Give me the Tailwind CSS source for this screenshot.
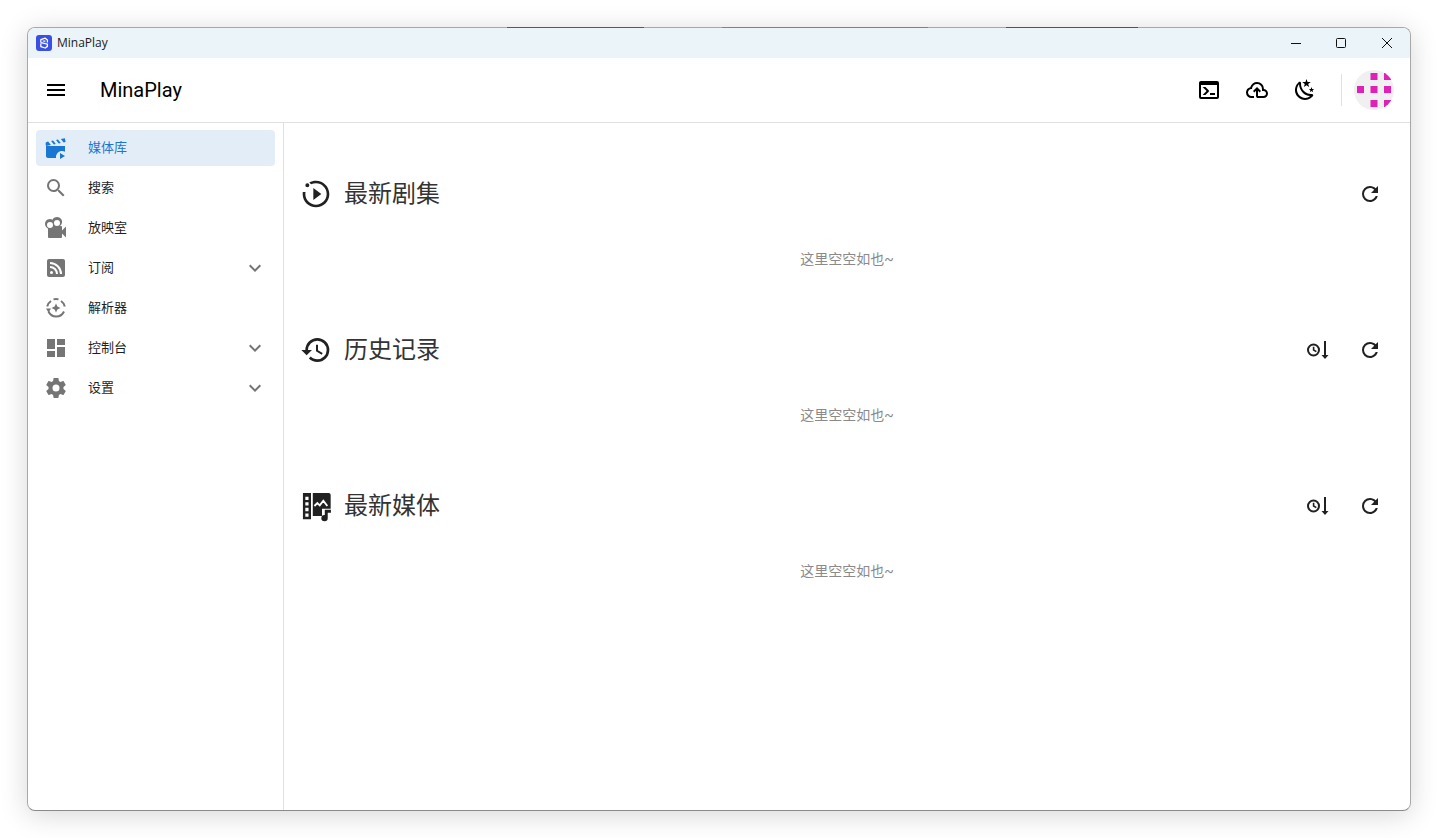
<!DOCTYPE html>
<html lang="en">
<head>
  <meta charset="UTF-8">
  <title>MinaPlay</title>
  <script src="https://cdn.jsdelivr.net/npm/@tailwindcss/browser@4"></script>
</head>
<body class="bg-white h-screen overflow-hidden pl-[27px] pt-[27px] font-['Roboto','Noto_Sans_CJK_SC',sans-serif]">
  <div class="relative w-[1384px] h-[784px] rounded-lg shadow-[0_4px_28px_rgba(0,0,0,0.16)]">
    <div class="w-full h-full flex flex-col overflow-hidden rounded-lg border border-[#a8a8a8] border-b-[#8a8a8a] bg-white">

      <!-- title bar -->
      <div class="h-[30px] shrink-0 flex items-center bg-[#ebf4f8]">
        <svg class="ml-2 w-4 h-4" viewBox="0 0 16 16">
          <rect width="16" height="16" rx="3" fill="#3a50e2"/>
          <path d="M4.8 7.6V4.6L9.2 3.2L11.4 5V7.6M4.8 7.6L11.4 9.2V11.4L9.2 13L4.8 11.6V8.6" fill="none" stroke="#fff" stroke-width="1.3" stroke-linejoin="round"/>
          <path d="M6.6 5.4L9.4 5.2V7.2L6.6 6.6Z" fill="#cfd6fb"/>
        </svg>
        <span class="ml-[5px] text-xs text-[#1a1a1a] font-['Open_Sans',sans-serif]">MinaPlay</span>
        <div class="ml-auto flex items-center h-full">
          <div class="w-[46px] h-full pl-[2px] flex items-center justify-center">
            <svg class="w-[10px] h-[10px]" viewBox="0 0 10 10"><path d="M0 5.5H10" stroke="#111" fill="none"/></svg>
          </div>
          <div class="w-[46px] h-full flex items-center justify-center">
            <svg class="w-[10px] h-[10px]" viewBox="0 0 10 10"><rect x="0.5" y="0.5" width="9" height="9" rx="1" stroke="#111" fill="none"/></svg>
          </div>
          <div class="w-[46px] h-full flex items-center justify-center">
            <svg class="w-[10px] h-[10px]" viewBox="0 0 10 10"><path d="M0 0L10 10M10 0L0 10" stroke="#111" fill="none"/></svg>
          </div>
        </div>
      </div>

      <!-- app bar -->
      <header class="h-[65px] shrink-0 flex items-center border-b border-[#e0e0e0] pr-4">
        <div class="w-12 h-12 ml-1 flex items-center justify-center">
          <svg class="w-6 h-6" viewBox="0 0 24 24"><path d="M3,6H21V8H3V6M3,11H21V13H3V11M3,16H21V18H3V16Z" fill="#000"/></svg>
        </div>
        <span class="ml-5 text-xl text-black">MinaPlay</span>
        <div class="ml-auto flex items-center">
          <div class="w-12 h-12 flex items-center justify-center">
            <svg class="w-6 h-6" viewBox="0 0 24 24"><path d="M20,19V7H4V19H20M20,3A2,2 0 0,1 22,5V19A2,2 0 0,1 20,21H4A2,2 0 0,1 2,19V5C2,3.89 2.9,3 4,3H20M13,17V15H18V17H13M9.58,13L5.57,9H8.4L11.7,12.3C12.09,12.69 12.09,13.33 11.7,13.72L8.42,17H5.59L9.58,13Z" fill="#000"/></svg>
          </div>
          <div class="w-12 h-12 flex items-center justify-center">
            <svg class="w-6 h-6" viewBox="0 0 24 24"><path d="M6.5 20Q4.22 20 2.61 18.43 1 16.85 1 14.58 1 12.63 2.17 11.1 3.35 9.57 5.25 9.15 5.88 6.85 7.75 5.43 9.63 4 12 4 14.93 4 16.96 6.04 19 8.07 19 11 20.73 11.2 21.86 12.5 23 13.78 23 15.5 23 17.38 21.69 18.69 20.38 20 18.5 20H13Q12.18 20 11.59 19.41 11 18.83 11 18V12.85L9.4 14.4L8 13L12 9L16 13L14.6 14.4L13 12.85V18H18.5Q19.55 18 20.27 17.27 21 16.55 21 15.5 21 14.45 20.27 13.73 19.55 13 18.5 13H17V11Q17 8.93 15.54 7.46 14.08 6 12 6 9.93 6 8.46 7.46 7 8.93 7 11H6.5Q5.05 11 4.03 12.03 3 13.05 3 14.5 3 15.95 4.03 17 5.05 18 6.5 18H9V20Z" fill="#000"/></svg>
          </div>
          <div class="w-12 h-12 flex items-center justify-center">
            <svg class="w-6 h-6" viewBox="0 0 24 24"><path d="M17.75,4.09L15.22,6.03L16.13,9.09L13.5,7.28L10.87,9.09L11.78,6.03L9.25,4.09L12.44,4L13.5,1L14.56,4L17.75,4.09M21.25,11L19.61,12.25L20.2,14.23L18.5,13.06L16.8,14.23L17.39,12.25L15.75,11L17.81,10.95L18.5,9L19.19,10.95L21.25,11M18.97,15.95C19.8,15.87 20.69,17.05 20.16,17.8C19.84,18.25 19.5,18.67 19.08,19.07C15.17,23 8.84,23 4.94,19.07C1.03,15.17 1.03,8.83 4.94,4.93C5.34,4.53 5.76,4.17 6.21,3.85C6.96,3.32 8.14,4.21 8.06,5.04C7.79,7.9 8.75,10.87 10.95,13.06C13.14,15.26 16.1,16.22 18.97,15.95M17.06,17.97C14.14,17.81 11.26,16.5 9.54,14.47C7.32,12.24 6.2,9.28 6.04,6.36C3.23,9.62 3.36,14.54 6.45,17.53C9.5,20.64 14.4,20.77 17.06,17.97Z" fill="#000"/></svg>
          </div>
          <div class="w-px h-8 mx-3 bg-[#e0e0e0]"></div>
          <div class="w-10 h-10 rounded-full overflow-hidden bg-[#f0f0f0]">
            <svg class="w-10 h-10" viewBox="0 0 40 40" fill="#e021b8">
              <rect x="16.5" y="3" width="7" height="7"/><rect x="30" y="3" width="7" height="7"/>
              <rect x="3" y="16" width="7" height="7"/><rect x="16.5" y="16" width="7" height="7"/><rect x="30" y="16" width="7" height="7"/>
              <rect x="16.5" y="30" width="7" height="7"/><rect x="30" y="30" width="7" height="7"/>
            </svg>
          </div>
        </div>
      </header>

      <div class="flex-1 flex min-h-0">
        <!-- sidebar -->
        <nav class="w-[256px] shrink-0 border-r border-[#e0e0e0] px-2 pt-[7px] flex flex-col gap-1 text-[13px] text-[#1f1f1f]">
          <div class="h-9 flex items-center px-2 rounded bg-[#e3edf7] text-[#1976d2]">
            <svg class="w-6 h-6 shrink-0" viewBox="0 0 24 24"><path d="M20.84 2.18L16.91 2.96L19.65 6.5L21.62 6.12L20.84 2.18M13.97 3.54L12 3.93L14.75 7.46L16.71 7.07L13.97 3.54M9.07 4.5L7.1 4.91L9.85 8.44L11.81 8.05L9.07 4.5M4.16 5.5L3.18 5.69A2 2 0 0 0 1.61 8.04L2 10L6.9 9.03L4.16 5.5M2 10V20C2 21.11 2.9 22 4 22H12.08C12.03 21.67 12 21.34 12 21C12 17.69 14.69 15 18 15C19.06 15 20.09 15.28 21 15.81V10H2M16 17V23L21 20L16 17Z" fill="#1976d2"/></svg>
            <span class="ml-5">媒体库</span>
          </div>
          <div class="h-9 flex items-center px-2">
            <svg class="w-6 h-6 shrink-0" viewBox="0 0 24 24"><path d="M9.5,3A6.5,6.5 0 0,1 16,9.5C16,11.11 15.41,12.59 14.44,13.73L14.71,14H15.5L20.5,19L19,20.5L14,15.5V14.71L13.73,14.44C12.59,15.41 11.11,16 9.5,16A6.5,6.5 0 0,1 3,9.5A6.5,6.5 0 0,1 9.5,3M9.5,5C7,5 5,7 5,9.5C5,12 7,14 9.5,14C12,14 14,12 14,9.5C14,7 12,5 9.5,5Z" fill="#757575"/></svg>
            <span class="ml-5">搜索</span>
          </div>
          <div class="h-9 flex items-center px-2">
            <svg class="w-6 h-6 shrink-0" viewBox="0 0 24 24"><path d="M18,14.5V11A1,1 0 0,0 17,10H16C18.24,8.39 18.76,5.27 17.15,3C15.54,0.78 12.42,0.26 10.17,1.87C9.5,2.35 8.96,3 8.6,3.73C6.25,2.28 3.17,3 1.72,5.37C0.28,7.72 1,10.8 3.36,12.25C3.57,12.37 3.78,12.5 4,12.58V21A1,1 0 0,0 5,22H17A1,1 0 0,0 18,21V17.5L22,21.5V10.5L18,14.5M13,4A3,3 0 0,1 16,7A3,3 0 0,1 13,10A3,3 0 0,1 10,7A3,3 0 0,1 13,4M6,6A3,3 0 0,1 9,9A3,3 0 0,1 6,12A3,3 0 0,1 3,9A3,3 0 0,1 6,6Z" fill="#757575"/></svg>
            <span class="ml-5">放映室</span>
          </div>
          <div class="h-9 flex items-center px-2">
            <svg class="w-6 h-6 shrink-0" viewBox="0 0 24 24"><path d="M5,3H19A2,2 0 0,1 21,5V19A2,2 0 0,1 19,21H5A2,2 0 0,1 3,19V5A2,2 0 0,1 5,3M7.5,15A1.5,1.5 0 0,0 6,16.5A1.5,1.5 0 0,0 7.5,18A1.5,1.5 0 0,0 9,16.5A1.5,1.5 0 0,0 7.5,15M6,10V12A6,6 0 0,1 12,18H14A8,8 0 0,0 6,10M6,6V8A10,10 0 0,1 16,18H18A12,12 0 0,0 6,6Z" fill="#757575"/></svg>
            <span class="ml-5">订阅</span>
            <svg class="w-6 h-6 ml-auto" viewBox="0 0 24 24"><path d="M7.41,8.58L12,13.17L16.59,8.58L18,10L12,16L6,10L7.41,8.58Z" fill="#757575"/></svg>
          </div>
          <div class="h-9 flex items-center px-2">
            <svg class="w-6 h-6 shrink-0" viewBox="0 0 24 24">
              <path d="M4.5 15.5A8.5 8.5 0 0 0 20 15.5" fill="none" stroke="#757575" stroke-width="2"/>
              <path d="M2 12.5L7 12.5L4.5 16.5Z" fill="#757575"/>
              <path d="M3.2 10.5A9 9 0 0 1 7 5M9.5 3.4A9 9 0 0 1 14.5 3.4M17 5A9 9 0 0 1 20.8 10.5" fill="none" stroke="#757575" stroke-width="2"/>
              <path d="M12 7.5L13.4 10.6L16.5 12L13.4 13.4L12 16.5L10.6 13.4L7.5 12L10.6 10.6Z" fill="#757575"/>
            </svg>
            <span class="ml-5">解析器</span>
          </div>
          <div class="h-9 flex items-center px-2">
            <svg class="w-6 h-6 shrink-0" viewBox="0 0 24 24"><path d="M13,3V9H21V3M13,21H21V11H13M3,21H11V15H3M3,13H11V3H3V13Z" fill="#757575"/></svg>
            <span class="ml-5">控制台</span>
            <svg class="w-6 h-6 ml-auto" viewBox="0 0 24 24"><path d="M7.41,8.58L12,13.17L16.59,8.58L18,10L12,16L6,10L7.41,8.58Z" fill="#757575"/></svg>
          </div>
          <div class="h-9 flex items-center px-2">
            <svg class="w-6 h-6 shrink-0" viewBox="0 0 24 24"><path d="M12,15.5A3.5,3.5 0 0,1 8.5,12A3.5,3.5 0 0,1 12,8.5A3.5,3.5 0 0,1 15.5,12A3.5,3.5 0 0,1 12,15.5M19.43,12.97C19.47,12.65 19.5,12.33 19.5,12C19.5,11.67 19.47,11.34 19.43,11L21.54,9.37C21.73,9.22 21.78,8.95 21.66,8.73L19.66,5.27C19.54,5.05 19.27,4.96 19.05,5.05L16.56,6.05C16.04,5.66 15.5,5.32 14.87,5.07L14.5,2.42C14.46,2.18 14.25,2 14,2H10C9.75,2 9.54,2.18 9.5,2.42L9.13,5.07C8.5,5.32 7.96,5.66 7.44,6.05L4.95,5.05C4.73,4.96 4.46,5.05 4.34,5.27L2.34,8.73C2.21,8.95 2.27,9.22 2.46,9.37L4.57,11C4.53,11.34 4.5,11.67 4.5,12C4.5,12.33 4.53,12.65 4.57,12.97L2.46,14.63C2.27,14.78 2.21,15.05 2.34,15.27L4.34,18.73C4.46,18.95 4.73,19.03 4.95,18.95L7.44,17.94C7.96,18.34 8.5,18.68 9.13,18.93L9.5,21.58C9.54,21.82 9.75,22 10,22H14C14.25,22 14.46,21.82 14.5,21.58L14.87,18.93C15.5,18.67 16.04,18.34 16.56,17.94L19.05,18.95C19.27,19.03 19.54,18.95 19.66,18.73L21.66,15.27C21.78,15.05 21.73,14.78 21.54,14.63L19.43,12.97Z" fill="#757575"/></svg>
            <span class="ml-5">设置</span>
            <svg class="w-6 h-6 ml-auto" viewBox="0 0 24 24"><path d="M7.41,8.58L12,13.17L16.59,8.58L18,10L12,16L6,10L7.41,8.58Z" fill="#757575"/></svg>
          </div>
        </nav>

        <!-- content -->
        <main class="flex-1 pt-[47px] pl-4 pr-4">
          <section class="h-[156px]">
            <div class="h-12 flex items-center">
              <svg class="w-8 h-8" viewBox="0 0 24 24"><path d="M10 16.5V7.5L16 12M22 12C22 6.46 17.5 2 12 2C10.15 2 8.42 2.5 6.94 3.36L8.34 4.77C9.45 4.28 10.69 4 12 4C16.41 4 20 7.59 20 12S16.41 20 12 20 4 16.41 4 12C4 11.5 4.05 11 4.14 10.5H2.11C2.04 11 2 11.5 2 12C2 17.5 6.5 22 12 22S22 17.5 22 12M5.5 4A1.5 1.5 0 0 0 4 5.5A1.5 1.5 0 0 0 5.5 7A1.5 1.5 0 0 0 7 5.5A1.5 1.5 0 0 0 5.5 4Z" fill="#212121"/></svg>
              <h2 class="ml-3 text-2xl text-[#333]">最新剧集</h2>
              <div class="ml-auto w-12 h-12 flex items-center justify-center">
                <svg class="w-6 h-6" viewBox="0 0 24 24"><path d="M17.65,6.35C16.2,4.9 14.21,4 12,4A8,8 0 0,0 4,12A8,8 0 0,0 12,20C15.73,20 18.84,17.45 19.73,14H17.65C16.83,16.33 14.61,18 12,18A6,6 0 0,1 6,12A6,6 0 0,1 12,6C13.66,6 15.14,6.69 16.22,7.78L13,11H20V4L17.65,6.35Z" fill="#212121"/></svg>
              </div>
            </div>
            <p class="mt-[31px] h-5 leading-5 text-center text-sm text-[#8a8a8a]">这里空空如也~</p>
          </section>
          <section class="h-[156px]">
            <div class="h-12 flex items-center">
              <svg class="w-8 h-8" viewBox="0 0 24 24"><path d="M13.5,8H12V13L16.28,15.54L17,14.33L13.5,12.25V8M13,3A9,9 0 0,0 4,12H1L4.96,16.03L9,12H6A7,7 0 0,1 13,5A7,7 0 0,1 20,12A7,7 0 0,1 13,19C11.07,19 9.32,18.21 8.06,16.94L6.64,18.36C8.27,20 10.5,21 13,21A9,9 0 0,0 22,12A9,9 0 0,0 13,3" fill="#212121"/></svg>
              <h2 class="ml-3 text-2xl text-[#333]">历史记录</h2>
              <div class="ml-auto flex gap-1">
                <div class="w-12 h-12 flex items-center justify-center">
                  <svg class="w-6 h-6" viewBox="0 0 24 24"><path fill-rule="evenodd" d="M7.5 5.5A6.5 6.5 0 1 1 7.5 18.5A6.5 6.5 0 1 1 7.5 5.5M7.5 7.5A4.5 4.5 0 1 0 7.5 16.5A4.5 4.5 0 1 0 7.5 7.5Z" fill="#212121"/><path d="M6.8 8.7H8.4V11.5L10.8 13L9.9 14.2L6.8 12.4Z" fill="#212121"/><path d="M18 3H20V17H22.5L19 21L15.5 17H18Z" fill="#212121"/></svg>
                </div>
                <div class="w-12 h-12 flex items-center justify-center">
                  <svg class="w-6 h-6" viewBox="0 0 24 24"><path d="M17.65,6.35C16.2,4.9 14.21,4 12,4A8,8 0 0,0 4,12A8,8 0 0,0 12,20C15.73,20 18.84,17.45 19.73,14H17.65C16.83,16.33 14.61,18 12,18A6,6 0 0,1 6,12A6,6 0 0,1 12,6C13.66,6 15.14,6.69 16.22,7.78L13,11H20V4L17.65,6.35Z" fill="#212121"/></svg>
                </div>
              </div>
            </div>
            <p class="mt-[31px] h-5 leading-5 text-center text-sm text-[#8a8a8a]">这里空空如也~</p>
          </section>
          <section class="h-[156px]">
            <div class="h-12 flex items-center">
              <svg class="w-8 h-8" viewBox="0 0 24 24">
                <path fill-rule="evenodd" d="M2.2 2.25H8.25V22H2.2ZM4 5V7.5H6.4V5ZM4 9.2V11.7H6.4V9.2ZM4 13.4V15.9H6.4V13.4ZM4 17.6V20H6.4V17.6Z" fill="#212121"/>
                <path d="M9.6 2.25H21.5A1.5 1.5 0 0 1 23 3.75V14H16.5V19.5H9.6Z" fill="#212121"/>
                <path d="M10.8 12L13 9.8L14.8 11.5L17.5 8L20.5 12" fill="none" stroke="#fff" stroke-width="1.4"/>
                <path d="M18.6 14.8H23.2V17H20.8V21A2.4 2.4 0 1 1 18.6 18.7Z" fill="#212121"/>
              </svg>
              <h2 class="ml-3 text-2xl text-[#333]">最新媒体</h2>
              <div class="ml-auto flex gap-1">
                <div class="w-12 h-12 flex items-center justify-center">
                  <svg class="w-6 h-6" viewBox="0 0 24 24"><path fill-rule="evenodd" d="M7.5 5.5A6.5 6.5 0 1 1 7.5 18.5A6.5 6.5 0 1 1 7.5 5.5M7.5 7.5A4.5 4.5 0 1 0 7.5 16.5A4.5 4.5 0 1 0 7.5 7.5Z" fill="#212121"/><path d="M6.8 8.7H8.4V11.5L10.8 13L9.9 14.2L6.8 12.4Z" fill="#212121"/><path d="M18 3H20V17H22.5L19 21L15.5 17H18Z" fill="#212121"/></svg>
                </div>
                <div class="w-12 h-12 flex items-center justify-center">
                  <svg class="w-6 h-6" viewBox="0 0 24 24"><path d="M17.65,6.35C16.2,4.9 14.21,4 12,4A8,8 0 0,0 4,12A8,8 0 0,0 12,20C15.73,20 18.84,17.45 19.73,14H17.65C16.83,16.33 14.61,18 12,18A6,6 0 0,1 6,12A6,6 0 0,1 12,6C13.66,6 15.14,6.69 16.22,7.78L13,11H20V4L17.65,6.35Z" fill="#212121"/></svg>
                </div>
              </div>
            </div>
            <p class="mt-[31px] h-5 leading-5 text-center text-sm text-[#8a8a8a]">这里空空如也~</p>
          </section>
        </main>
      </div>
    </div>

    <!-- desktop showing through the top edge -->
    <div class="absolute top-0 left-[480px] w-[137px] h-px bg-[#4d5f55]"></div>
    <div class="absolute top-0 left-[695px] w-[206px] h-px bg-[#6f9450]"></div>
    <div class="absolute top-0 left-[979px] w-[132px] h-px bg-[#5f4a5a]"></div>
  </div>
</body>
</html>
